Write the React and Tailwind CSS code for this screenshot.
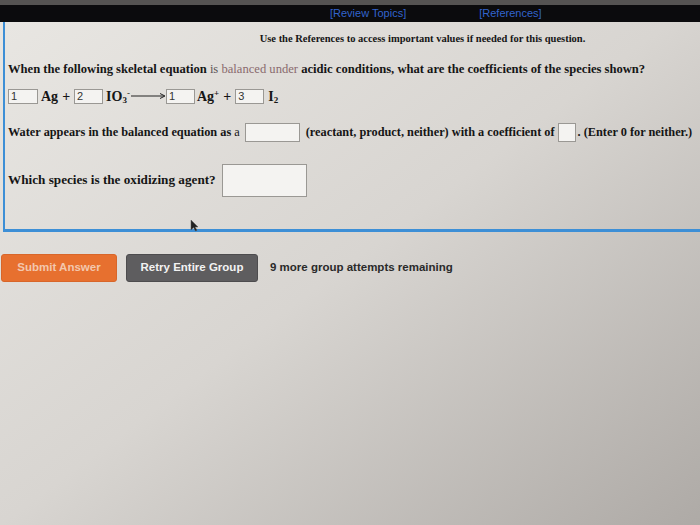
const serif = { fontFamily: '"Liberation Serif", "Times New Roman", serif' };

function Box({ value, className = "w-[30px] h-[15px]" }) {
  return (
    <span
      className={`inline-flex shrink-0 items-center px-[2px] bg-[#f4f3f1] border border-[#9a9894] text-[11px] font-normal text-[#333] leading-none ${className}`}
      style={{ fontFamily: '"Liberation Sans", Arial, sans-serif' }}
    >
      {value}
    </span>
  );
}

export default function App() {
  return (
    <div className="relative w-[700px] h-[525px] overflow-hidden bg-linear-to-br from-[#e9e7e3] via-[#d8d5d1] to-[#aeaaa6]">
      {/* top bar */}
      <div className="h-[5px] bg-[#555352]" />
      <div className="h-[17px] bg-[#0b0b0d] flex items-center text-[11px] text-[#3264cc]" style={{ fontFamily: '"Liberation Sans", Arial, sans-serif' }}>
        <span className="ml-[330px]">[Review Topics]</span>
        <span className="ml-[73px]">[References]</span>
      </div>

      {/* question panel */}
      <div className="ml-[3px] border-l-2 border-b-[3px] border-[#3d8fd6] h-[210px] text-[#151515] whitespace-nowrap" style={serif}>
        <p className="pt-[9px] pl-[140px] text-center text-[10.5px] font-bold">
          Use the References to access important values if needed for this question.
        </p>

        <p className="mt-[13px] pl-[3px] text-[12.6px] font-bold">
          When the following skeletal equation <span className="font-normal text-[#5b5557]">is</span>{" "}
          <span className="font-normal text-[#8a6a6e]">balanced under</span> acidic conditions, what are the coefficients of the species shown?
        </p>

        <div className="mt-[7px] pl-[3px] flex items-center text-[14px] font-bold">
          <Box value="1" className="w-[30px] h-[15px]" />
          <span className="ml-[3px]">Ag</span>
          <span className="mx-[4px]">+</span>
          <Box value="2" className="w-[29px] h-[15px]" />
          <span className="ml-[3px]">
            IO<sub className="text-[9px]">3</sub>
            <sup className="text-[9px] font-normal">-</sup>
          </span>
          <svg width="35" height="8" viewBox="0 0 35 8" className="ml-[1px]">
            <line x1="0" y1="4" x2="33" y2="4" stroke="#222" strokeWidth="1" />
            <path d="M29 1.5 L34 4 L29 6.5" fill="none" stroke="#222" strokeWidth="1" />
          </svg>
          <Box value="1" className="w-[29px] h-[15px]" />
          <span className="ml-[2px]">
            Ag<sup className="text-[9px]">+</sup>
          </span>
          <span className="mx-[4px]">+</span>
          <Box value="3" className="w-[29px] h-[15px]" />
          <span className="ml-[4px]">
            I<sub className="text-[9px]">2</sub>
          </span>
        </div>

        <div className="mt-[16px] pl-[3px] flex items-center text-[12.3px] font-bold">
          <span>Water appears in the balanced equation as <span className="font-normal">a</span></span>
          <Box value="" className="ml-[5px] w-[55px] h-[19px]" />
          <span className="ml-[6px]">(reactant, product, neither) with a coefficient of</span>
          <Box value="" className="ml-[3px] w-[18px] h-[19px]" />
          <span className="ml-[2px]">. (Enter 0 for neither.)</span>
        </div>

        <div className="mt-[22px] pl-[3px] flex items-center text-[13.2px] font-bold">
          <span>Which species is the oxidizing agent?</span>
          <Box value="" className="ml-[6px] w-[85px] h-[33px]" />
        </div>
      </div>

      {/* buttons */}
      <div className="mt-[22px] flex items-center text-[11.5px] font-bold" style={{ fontFamily: '"Liberation Sans", Arial, sans-serif' }}>
        <button className="ml-[1px] w-[116px] h-[28px] rounded-[3px] bg-[#e7702f] text-[#f3c7ad] border border-[#d8662a]">
          Submit Answer
        </button>
        <button className="ml-[9px] w-[132px] h-[28px] rounded-[3px] bg-[#5e5d5f] text-[#f2f2f2] border border-[#4d4c4e]">
          Retry Entire Group
        </button>
        <span className="ml-[12px] text-[#2a2a2a]">9 more group attempts remaining</span>
      </div>

      {/* mouse cursor */}
      <svg className="absolute left-[190px] top-[219px]" width="9" height="13" viewBox="0 0 9 13">
        <path d="M1 1 L1 11 L3.5 8.5 L5.5 12 L7 11.3 L5 8 L8 8 Z" fill="#222" stroke="#555" strokeWidth="0.5" />
      </svg>
    </div>
  );
}
